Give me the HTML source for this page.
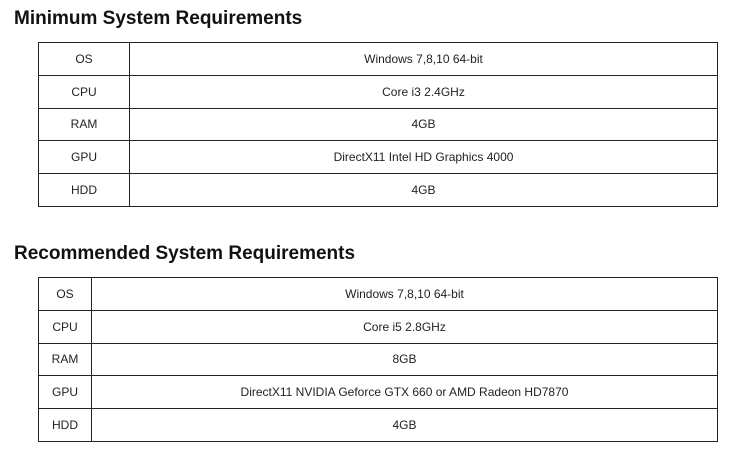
<!DOCTYPE html>
<html><head><style>
body{margin:0;background:#fff;font-family:"Liberation Sans",Arial,sans-serif;width:740px;height:454px;position:relative;overflow:hidden}
h2{position:absolute;left:14px;margin:0;font-size:19px;font-weight:bold;color:#111;line-height:22px}
table{position:absolute;left:38px;width:680px;border-collapse:collapse}
td{border:1px solid #222;height:31.8px;padding:0;text-align:center;font-size:12px;color:#222}
</style></head><body>
<h2 style="top:8px">Minimum System Requirements</h2>
<table style="top:42px"><colgroup><col style="width:91px"><col></colgroup>
<tr><td>OS</td><td>Windows 7,8,10 64-bit</td></tr>
<tr><td>CPU</td><td>Core i3 2.4GHz</td></tr>
<tr><td>RAM</td><td>4GB</td></tr>
<tr><td>GPU</td><td>DirectX11 Intel HD Graphics 4000</td></tr>
<tr><td>HDD</td><td>4GB</td></tr>
</table>
<h2 style="top:243px">Recommended System Requirements</h2>
<table style="top:277px"><colgroup><col style="width:53px"><col></colgroup>
<tr><td>OS</td><td>Windows 7,8,10 64-bit</td></tr>
<tr><td>CPU</td><td>Core i5 2.8GHz</td></tr>
<tr><td>RAM</td><td>8GB</td></tr>
<tr><td>GPU</td><td>DirectX11 NVIDIA Geforce GTX 660 or AMD Radeon HD7870</td></tr>
<tr><td>HDD</td><td>4GB</td></tr>
</table>
</body></html>
